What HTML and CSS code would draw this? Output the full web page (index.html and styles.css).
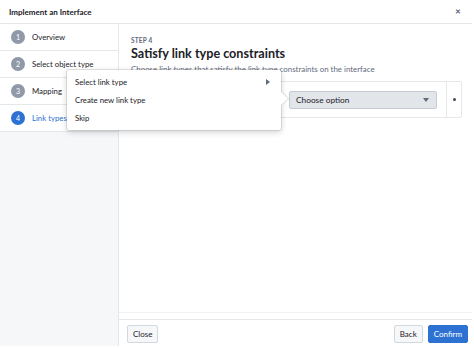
FILE: index.html
```html
<!DOCTYPE html>
<html lang="en">
<head>
    <meta charset="UTF-8">
    <title>Implement an Interface</title>
    <link rel="stylesheet" href="styles.css">
</head>
<body>
    <div class="dialog">
        <div class="header">
            <span class="title">Implement an Interface</span>
            <span class="close">&#x2715;</span>
        </div>
        <div class="body">
            <div class="sidebar">
                <div class="step"><span class="num">1</span>Overview</div>
                <div class="step"><span class="num">2</span>Select object type</div>
                <div class="step"><span class="num">3</span>Mapping</div>
                <div class="step step-active"><span class="num">4</span>Link types</div>
            </div>
            <div class="main">
                <div class="content">
                    <div class="eyebrow">STEP 4</div>
                    <h2 class="heading">Satisfy link type constraints</h2>
                    <p class="desc">Choose link types that satisfy the link type constraints on the interface</p>
                    <div class="card">
                        <div class="card-left"></div>
                        <div class="select">
                            <span>Choose option</span>
                            <svg width="6" height="4" viewBox="0 0 6 4"><path d="M0 0h6L3 4z" fill="#5f6b7c"/></svg>
                        </div>
                        <div class="card-end"><span class="dot"></span></div>
                    </div>
                </div>
                <div class="footer">
                    <button class="btn">Close</button>
                    <div class="actions">
                        <button class="btn">Back</button>
                        <button class="btn btn-primary">Confirm</button>
                    </div>
                </div>
            </div>
        </div>
        <!-- menu popover -->
        <div class="menu">
            <div class="menu-item">Select link type
                <svg width="4" height="6" viewBox="0 0 4 6"><path d="M0 0l4 3-4 3z" fill="#5f6b7c"/></svg>
            </div>
            <div class="menu-item">Create new link type</div>
            <div class="menu-item">Skip</div>
            <span class="menu-arrow"></span>
        </div>
    </div>
</body>
</html>
```

FILE: styles.css
```css
* {
    padding: 0;
    margin: 0;
    box-sizing: border-box;
}

body {
    font-family: Lato, "Noto Sans", sans-serif;
    color: #1c2127;
    background: #fff;
}

.dialog {
    position: relative;
    width: 472px;
    height: 348px;
    display: flex;
    flex-direction: column;
}

/* 头部 */
.header {
    height: 24px;
    padding: 0 9px;
    display: flex;
    align-items: center;
    justify-content: space-between;
    border-bottom: 1px solid #e5e8eb;
}

.title {
    font-size: 8px;
    font-weight: 700;
}

.close {
    font-size: 7px;
    color: #5f6b7c;
    font-weight: 700;
    margin-right: 2px;
}

.body {
    flex: 1;
    display: flex;
}

/* 侧栏 */
.sidebar {
    width: 119px;
    background: #f6f7f9;
    border-right: 1px solid #e5e8eb;
    margin-bottom: 2px;
}

.step {
    height: 27px;
    display: flex;
    align-items: center;
    padding-left: 11px;
    font-size: 7.8px;
    background: #fff;
    border-bottom: 1px solid #e5e8eb;
}

.num {
    width: 14px;
    height: 14px;
    border-radius: 50%;
    background: #8f99a8;
    color: #fff;
    font-size: 7px;
    display: flex;
    align-items: center;
    justify-content: center;
    margin-right: 7px;
}

.step-active {
    color: #2d72d2;
}

.step-active .num {
    background: #2d72d2;
}

/* 主区域 */
.main {
    flex: 1;
    display: flex;
    flex-direction: column;
}

.content {
    flex: 1;
    padding: 13px 10px 0 12px;
    border-bottom: 1px solid #f0f2f4;
    margin-bottom: 6px;
}

.eyebrow {
    font-size: 6.5px;
    font-weight: 700;
    color: #5f6b7c;
    letter-spacing: 0.2px;
}

.heading {
    font-size: 12.6px;
    font-weight: 700;
    margin-top: 2px;
}

.desc {
    font-size: 7.9px;
    color: #5f6b7c;
    margin-top: 3px;
}

.card {
    margin-top: 7px;
    height: 37px;
    border: 1px solid #e5e8eb;
    border-radius: 2px;
    display: flex;
    align-items: center;
}

.card-left {
    flex: 1;
}

.select {
    width: 148px;
    height: 18px;
    background: #e2e6eb;
    border: 1px solid #c5cbd3;
    border-radius: 2px;
    display: flex;
    align-items: center;
    justify-content: space-between;
    padding: 0 7px 0 6px;
    font-size: 8.3px;
    margin-right: 9px;
}

.card-end {
    width: 15px;
    align-self: stretch;
    border-left: 1px solid #e5e8eb;
    display: flex;
    align-items: center;
    justify-content: center;
}

.dot {
    width: 3px;
    height: 3px;
    border-radius: 50%;
    background: #404854;
}

/* 底部 */
.footer {
    height: 29px;
    border-top: 1px solid #e5e8eb;
    display: flex;
    align-items: center;
    justify-content: space-between;
    padding: 0 4px 0 8px;
}

.actions {
    display: flex;
    gap: 5px;
}

.btn {
    font-family: inherit;
    font-size: 8px;
    height: 18px;
    padding: 0 5px;
    color: #1c2127;
    background: #f6f7f9;
    border: 1px solid #d3d8de;
    border-radius: 2px;
}

.btn-primary {
    background: #2d72d2;
    border-color: #2d72d2;
    color: #fff;
}

/* 菜单 */
.menu {
    position: absolute;
    left: 67px;
    top: 70px;
    width: 214px;
    padding: 3px 0;
    background: #fff;
    border-radius: 2px;
    box-shadow: 0 0 0 1px rgba(17, 20, 24, .1), 0 2px 6px rgba(17, 20, 24, .2);
}

.menu-item {
    height: 18px;
    padding: 0 11px 0 8px;
    display: flex;
    align-items: center;
    justify-content: space-between;
    font-size: 7.8px;
}

.menu-arrow {
    position: absolute;
    right: -5px;
    top: 24px;
    width: 9px;
    height: 9px;
    background: #fff;
    transform: rotate(45deg);
    box-shadow: 1px -1px 1px rgba(17, 20, 24, .12);
}
```
